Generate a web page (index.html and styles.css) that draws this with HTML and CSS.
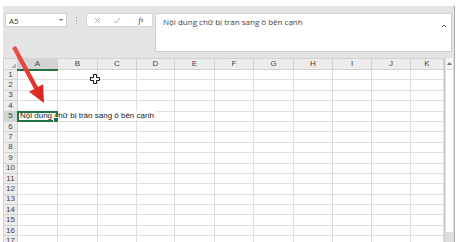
FILE: index.html
```html
<!DOCTYPE html>
<html lang="vi">
<head>
    <meta charset="UTF-8">
    <title>Excel - tràn chữ</title>
    <link rel="stylesheet" href="styles.css">
</head>
<body>
    <div class="sheet">
        <div class="formula-bar">
            <div class="name-box">A5 <span class="drop"></span></div>
            <div class="grip"><i></i><i></i><i></i></div>
            <div class="fx-buttons">
                <span class="btn">
                    <svg width="7" height="7" viewBox="0 0 7 7"><path d="M1 1 L6 6 M6 1 L1 6" stroke="#b4b4b4" stroke-width="1" fill="none"/></svg>
                </span>
                <span class="btn">
                    <svg width="8" height="7" viewBox="0 0 8 7"><path d="M1 4 L3 6 L7 1" stroke="#b4b4b4" stroke-width="1" fill="none"/></svg>
                </span>
                <span class="btn fx">f<sub>x</sub></span>
            </div>
            <div class="formula-input">
                <span>Nội dung chữ bị tràn sang ô bên cạnh</span>
                <span class="collapse">
                    <svg width="6" height="4" viewBox="0 0 6 4"><path d="M1 3 L3 1 L5 3" stroke="#666" stroke-width="1" fill="none"/></svg>
                </span>
            </div>
        </div>

        <div class="workbook">
            <table class="cells">
                <colgroup>
                    <col style="width:14px"><col style="width:40px"><col style="width:40px"><col style="width:39px">
                    <col style="width:38px"><col style="width:40px"><col style="width:39px"><col style="width:40px">
                    <col style="width:39px"><col style="width:39px"><col style="width:39px"><col style="width:33px">
                </colgroup>
                <tr class="head-row">
                    <th class="corner"><span class="tri"></span></th>
                    <th class="active">A</th><th>B</th><th>C</th><th>D</th><th>E</th><th>F</th><th>G</th><th>H</th><th>I</th><th>J</th><th>K</th>
                </tr>
                <tr><th>1</th><td></td><td></td><td></td><td></td><td></td><td></td><td></td><td></td><td></td><td></td><td></td></tr>
                <tr><th>2</th><td></td><td></td><td></td><td></td><td></td><td></td><td></td><td></td><td></td><td></td><td></td></tr>
                <tr><th>3</th><td></td><td></td><td></td><td></td><td></td><td></td><td></td><td></td><td></td><td></td><td></td></tr>
                <tr><th>4</th><td></td><td></td><td></td><td></td><td></td><td></td><td></td><td></td><td></td><td></td><td></td></tr>
                <tr><th class="active">5</th><td class="selected"><span class="overflow">Nội dung chữ bị tràn sang ô bên cạnh</span></td><td></td><td></td><td></td><td></td><td></td><td></td><td></td><td></td><td></td><td></td></tr>
                <tr><th>6</th><td></td><td></td><td></td><td></td><td></td><td></td><td></td><td></td><td></td><td></td><td></td></tr>
                <tr><th>7</th><td></td><td></td><td></td><td></td><td></td><td></td><td></td><td></td><td></td><td></td><td></td></tr>
                <tr><th>8</th><td></td><td></td><td></td><td></td><td></td><td></td><td></td><td></td><td></td><td></td><td></td></tr>
                <tr><th>9</th><td></td><td></td><td></td><td></td><td></td><td></td><td></td><td></td><td></td><td></td><td></td></tr>
                <tr><th>10</th><td></td><td></td><td></td><td></td><td></td><td></td><td></td><td></td><td></td><td></td><td></td></tr>
                <tr><th>11</th><td></td><td></td><td></td><td></td><td></td><td></td><td></td><td></td><td></td><td></td><td></td></tr>
                <tr><th>12</th><td></td><td></td><td></td><td></td><td></td><td></td><td></td><td></td><td></td><td></td><td></td></tr>
                <tr><th>13</th><td></td><td></td><td></td><td></td><td></td><td></td><td></td><td></td><td></td><td></td><td></td></tr>
                <tr><th>14</th><td></td><td></td><td></td><td></td><td></td><td></td><td></td><td></td><td></td><td></td><td></td></tr>
                <tr><th>15</th><td></td><td></td><td></td><td></td><td></td><td></td><td></td><td></td><td></td><td></td><td></td></tr>
                <tr><th>16</th><td></td><td></td><td></td><td></td><td></td><td></td><td></td><td></td><td></td><td></td><td></td></tr>
                <tr><th>17</th><td></td><td></td><td></td><td></td><td></td><td></td><td></td><td></td><td></td><td></td><td></td></tr>
            </table>

            <div class="scrollbar">
                <div class="scroll-btn">
                    <svg width="5" height="3" viewBox="0 0 5 3"><path d="M0 3 L2.5 0 L5 3 Z" fill="#777"/></svg>
                </div>
                <div class="thumb"></div>
            </div>
        </div>

        <!-- annotation arrow pointing at A5 -->
        <svg class="arrow" width="60" height="110" viewBox="0 0 60 110">
            <defs>
                <linearGradient id="red" x1="0" y1="0" x2="1" y2="0">
                    <stop offset="0" stop-color="#f0524c"/>
                    <stop offset="1" stop-color="#d8231f"/>
                </linearGradient>
            </defs>
            <polygon points="9.1,42 12.9,40 34.9,81 40.1,78.2 41,97 25.9,85.8 31.1,83" fill="url(#red)"/>
        </svg>

        <!-- mouse cursor -->
        <svg class="cursor" width="10" height="10" viewBox="0 0 10 10">
            <path d="M3.5 0.5 H6.5 V3.5 H9.5 V6.5 H6.5 V9.5 H3.5 V6.5 H0.5 V3.5 H3.5 Z" fill="#fff" stroke="#111" stroke-width="1"/>
        </svg>
    </div>
</body>
</html>
```

FILE: styles.css
```css
* {
    margin: 0;
    padding: 0;
    box-sizing: border-box;
}

body {
    background: #fff;
    font-family: "Liberation Sans", Arial, sans-serif;
}

/* Window frame */
.sheet {
    position: relative;
    margin: 6px 0 0 3px;
    width: 452px;
    height: 236px;
    background: #e4e4e4;
    border-right: 1px solid #a3b5ab;
    overflow: hidden;
}

/* Formula bar */
.formula-bar {
    display: flex;
    align-items: flex-start;
    height: 52px;
    padding: 7px 0 0 2px;
}

.name-box {
    width: 62px;
    height: 14px;
    background: #fff;
    border: 1px solid #d0d0d0;
    display: flex;
    align-items: center;
    justify-content: space-between;
    padding: 0 3px 0 3px;
    font: 8px "Open Sans", sans-serif;
    color: #333;
}

.name-box .drop {
    width: 0;
    height: 0;
    border-left: 2px solid transparent;
    border-right: 2px solid transparent;
    border-top: 2px solid #666;
}

.grip {
    width: 19px;
    height: 14px;
    display: flex;
    flex-direction: column;
    align-items: center;
    justify-content: center;
    gap: 2px;
}

.grip i {
    width: 1px;
    height: 1px;
    background: #a0a0a0;
}

.fx-buttons {
    width: 67px;
    height: 14px;
    background: #fff;
    border: 1px solid #d6d6d6;
    display: flex;
    align-items: center;
}

.fx-buttons .btn {
    width: 20px;
    display: flex;
    justify-content: center;
    align-items: center;
}

.fx-buttons .fx {
    margin-left: 4px;
    font: italic 8px "Liberation Serif", serif;
    color: #333;
}

.fx-buttons .fx sub {
    font-size: 6px;
}

.formula-input {
    margin-left: 2px;
    width: 297px;
    height: 39px;
    background: #fff;
    border: 1px solid #d0d0d0;
    display: flex;
    justify-content: space-between;
    padding: 2px 4px 0 7px;
    font: 8px "Open Sans", sans-serif;
    color: #444;
}

.formula-input .collapse {
    padding-top: 3px;
}

/* Grid */
.workbook {
    display: flex;
}

.cells {
    width: 440px;
    table-layout: fixed;
    border-collapse: collapse;
    background: #fff;
}

.cells tr {
    height: 10.4px;
}

.cells tr.head-row {
    height: 11px;
}

.cells th {
    background: #ececec;
    border: 1px solid #d2d2d2;
    font-weight: normal;
    font-size: 8px;
    line-height: 8px;
    color: #444;
    padding: 0;
    text-align: center;
}

.cells th.active {
    background: #d4d4d4;
    color: #1d5e3b;
}

.head-row th.active {
    border-bottom: 2px solid #217346;
}

.cells td {
    border: 1px solid #dedede;
    padding: 0;
    font-size: 8px;
    line-height: 8px;
}

.corner {
    position: relative;
}

.corner .tri {
    position: absolute;
    right: 1px;
    bottom: 1px;
    width: 0;
    height: 0;
    border-left: 5px solid transparent;
    border-bottom: 5px solid #b8b8b8;
}

/* Active cell A5, text spills into B..D */
td.selected {
    position: relative;
    white-space: nowrap;
    overflow: visible;
}

td.selected .overflow {
    position: relative;
    z-index: 1;
    background: #fff;
    padding: 0 2px 0 2px;
    color: #222;
}

td.selected::after {
    content: "";
    position: absolute;
    left: -1px;
    top: -1px;
    right: -1px;
    bottom: -1px;
    border: 2px solid #217346;
    z-index: 2;
}

td.selected::before {
    content: "";
    position: absolute;
    right: -2px;
    bottom: -2px;
    width: 4px;
    height: 4px;
    background: #217346;
    border: 1px solid #fff;
    z-index: 3;
}

/* Vertical scrollbar */
.scrollbar {
    width: 11px;
    height: 184px;
    background: #dedede;
    border-left: 1px solid #cdcdcd;
    display: flex;
    flex-direction: column;
    padding: 0 1px 10px 1px;
}

.scroll-btn {
    height: 11px;
    display: flex;
    align-items: center;
    justify-content: center;
    background: #f4f4f4;
}

.thumb {
    flex: 1;
    background: #fff;
    margin-top: 1px;
}

/* Overlays */
.arrow {
    position: absolute;
    left: 0;
    top: 0;
}

.cursor {
    position: absolute;
    left: 87px;
    top: 68px;
}
```
